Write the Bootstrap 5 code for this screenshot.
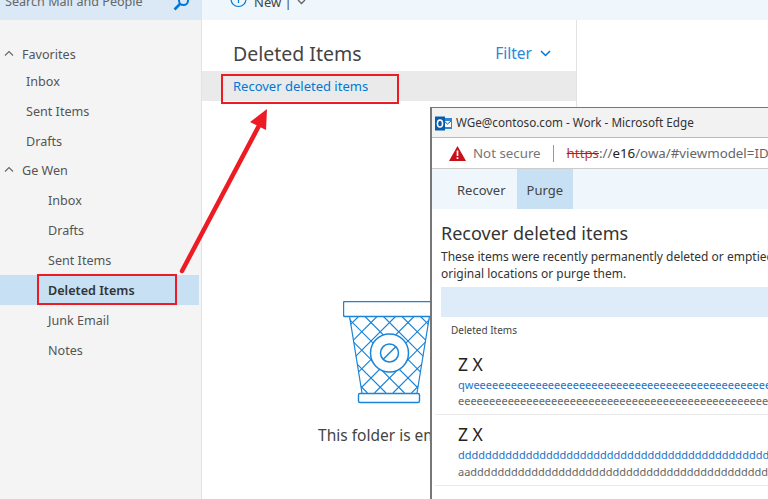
<!DOCTYPE html>
<html lang="en"><head><meta charset="utf-8"><title>Deleted Items</title>
<link href="https://cdn.jsdelivr.net/npm/bootstrap@5.3.0/dist/css/bootstrap.min.css" rel="stylesheet">
<style>
html,body{height:499px;overflow:hidden}
body{font-family:"Noto Sans","Open Sans",sans-serif;color:#333;position:relative;background:#fff}
.shell{height:499px}
.side{width:202px;background:#f4f4f4;border-right:1px solid #e3e3e3;flex:none}
.searchbar{height:20px;background:#dbe9f7;overflow:hidden;color:#666;font-size:12.600px;line-height:20px}
.searchbar span{margin:-8px 0 0 5px}
.searchbar svg{margin:-5px 11px 0 0}
.favs{padding-top:19px}
.nv-head,.nv-item,.nv-sub{height:30px;line-height:32px;font-size:12.600px;color:#555;white-space:nowrap}
.nv-head{padding-left:22px;position:relative}
.nv-fav{height:27px}
.nv-wen{margin-top:-1px}
.nv-head svg{position:absolute;left:4px;top:11px}
.nv-item{padding-left:26px}
.nv-sub{padding-left:48px}
.nv-sel{background:#c7e0f4;font-weight:600;color:#333;margin-right:2px}
.main{min-width:0}
.cmdbar{height:20px;background:#eff6fc;overflow:hidden;font-size:13px;color:#444;line-height:20px;padding-left:28px}
.cmdbar span{margin-top:-8px;margin-left:7px}
.cmdbar svg{flex:none}
.cmdbar .chev{margin-left:5px}
.pane{width:375px;height:88px;border-right:1px solid #e3e3e3}
.pane-top{height:51px;padding:19px 25px 0 31px}
.pane-title{font-size:19.500px;line-height:30px;color:#444}
.pane-filter{font-size:15.500px;line-height:29px;height:29px;color:#2b88d8}
.pane-link{height:30px;background:#eaeaea;padding-left:31px;font-size:13px;line-height:30px;color:#0078d7;text-decoration:none;display:block}
.empty-zone{width:375px}
.empty-zone svg{margin-top:193px;display:block;margin-left:141px}
.empty-zone p{font-size:15.500px;color:#444;text-align:center;margin:19px 0 0;line-height:24px}
.popup{position:absolute;left:430px;top:107px;right:0;bottom:0;background:#fff;border:solid #777;border-width:1px 0 0 2px;overflow:hidden;white-space:nowrap}
.pop-title{height:30px;background:#f2f2f2;border-bottom:1px solid #bbb;font-size:11.700px;color:#333;padding:1px 0 0 3px;gap:4px}
.pop-addr{height:31px;border-bottom:1px solid #ccc;padding:1px 0 0 17px;font-size:13.300px}
.pop-addr svg,.pop-addr .warn,.pop-addr .divi{flex:none}
.pop-addr .warn{color:#767676;margin-left:7px}
.pop-addr .divi{width:1px;height:17px;background:#999;margin:0 13px 0 12px}
.pop-addr s{color:#b33;text-decoration-color:#e00}
.pop-url{color:#666}.pop-url em{font-style:normal;color:#222}
.pop-tools{height:40px;background:#eff6fc;font-size:13px;line-height:42px;color:#444;padding-left:15px}
.pop-tools div{padding:0 11px 0 10px}
.pop-tools .on{background:#c7e0f4;padding:0 10px}
.pop-body{padding:11px 0 0 9px}
.pop-h{font-size:18px;line-height:27px;color:#333;margin:0;font-weight:400}
.pop-p{font-size:12px;line-height:17px;margin:1px 0 0;color:#333}
.pop-band{height:30px;background:#deecf9;margin-top:5px}
.pop-lbl{font-size:10px;line-height:14px;margin:6px 0 0 10px;color:#444}
.rowz{margin-left:-6px;padding:5px 0 0 23px;border-bottom:1px solid #eaeaea;height:71px}
.rowz1{margin-top:6px;height:72px;padding-top:7px}
.rowz .who{font-size:17.500px;line-height:26px;color:#222;margin-top:1px}
.rowz .blu{font-size:11px;line-height:16px;color:#1a73c9}
.rowz .gry{font-size:11px;line-height:16px;color:#666}
.rowz2 .gry{margin-top:1px}
.anno{position:absolute;left:0;top:0;pointer-events:none}
.redbox{position:absolute;border:2px solid #ed1c24}
.rb1{left:221px;top:74px;width:178px;height:30px}
.rb2{left:37px;top:274px;width:140px;height:31px}
</style></head>
<body>
<div class="d-flex shell">
  <aside class="side">
    <div class="searchbar d-flex justify-content-between align-items-start">
      <span>Search Mail and People</span>
      <svg width="17" height="17" viewBox="0 0 17 17" fill="none" stroke="#0078d7" stroke-width="2"><circle cx="10.500" cy="5.500" r="4.500"/><path d="M7 9L1.500 14.500" stroke-width="2.600"/></svg>
    </div>
    <nav class="favs">
      <div class="nv-head nv-fav"><svg width="10" height="7" viewBox="0 0 10 7" fill="none" stroke="#666" stroke-width="1.100"><path d="M1 5.500L5 1.500L9 5.500"/></svg>Favorites</div>
      <div class="nv-item">Inbox</div><div class="nv-item">Sent Items</div><div class="nv-item">Drafts</div>
      <div class="nv-head nv-wen"><svg width="10" height="7" viewBox="0 0 10 7" fill="none" stroke="#666" stroke-width="1.100"><path d="M1 5.500L5 1.500L9 5.500"/></svg>Ge Wen</div>
      <div class="nv-sub">Inbox</div><div class="nv-sub">Drafts</div><div class="nv-sub">Sent Items</div>
      <div class="nv-sub nv-sel">Deleted Items</div><div class="nv-sub">Junk Email</div><div class="nv-sub">Notes</div>
    </nav>
  </aside>
  <main class="main flex-grow-1">
    <div class="cmdbar d-flex align-items-start">
      <svg width="17" height="8" viewBox="0 0 17 8" fill="none" stroke="#0078d7" stroke-width="1.200"><circle cx="8.500" cy="-1" r="7.500"/><path d="M8.500 -5V3M4.500 -1H12.500"/></svg>
      <span>New |</span>
      <svg class="chev" width="9" height="6" viewBox="0 0 9 6" fill="none" stroke="#666" stroke-width="1.400"><path d="M1 0L4.500 3.500L8 0"/></svg>
    </div>
    <section class="pane">
      <div class="pane-top d-flex justify-content-between">
        <div class="pane-title">Deleted Items</div>
        <div class="pane-filter d-flex align-items-center gap-2">Filter <svg width="11" height="7" viewBox="0 0 11 7" fill="none" stroke="#0078d7" stroke-width="1.500"><path d="M1 1L5.500 5.500L10 1"/></svg></div>
      </div>
      <a class="pane-link" href="#">Recover deleted items</a>
    </section>
    <section class="empty-zone">
      <svg width="94" height="103" viewBox="343 301 94 103" fill="none" stroke="#1a84d8" stroke-width="1.200">
        <defs><clipPath id="binc"><path d="M349 316L430 316L417 393L362 393Z"/></clipPath></defs>
        <g clip-path="url(#binc)">
          <path d="M272 316L349 393M290.500 316L367.500 393M309 316L386 393M327.500 316L404.500 393M346 316L423 393M364.500 316L441.500 393M383 316L460 393M401.500 316L478.500 393M420 316L497 393"/>
          <path d="M359 316L282 393M377.500 316L300.500 393M396 316L319 393M414.500 316L337.500 393M433 316L356 393M451.500 316L374.500 393M470 316L393 393M488.500 316L411.500 393M507 316L430 393"/>
        </g>
        <path d="M349.500 316L362 393M429.500 316L417 393"/>
        <circle cx="389.500" cy="353" r="19" fill="#fff" stroke-width="1.500"/>
        <circle cx="389.500" cy="353" r="9" fill="#fff" stroke-width="1.500"/>
        <path d="M383 359.500L396 346.500" stroke-width="1.500"/>
        <rect x="343.500" y="301.500" width="92" height="15" rx="1.500" fill="#fff" stroke-width="1.400"/>
        <rect x="358.500" y="393.500" width="61" height="9" rx="1.500" fill="#fff" stroke-width="1.400"/>
      </svg>
      <p>This folder is empty</p>
    </section>
  </main>
</div>

<section class="popup">
  <div class="pop-title d-flex align-items-center">
    <svg width="17" height="17" viewBox="0 0 17 17"><rect x="5" y="3" width="12" height="11" fill="#2b88d8"/><path d="M9 6H16V12H9Z" fill="#fff"/><path d="M9 6L12.500 9L16 6" fill="none" stroke="#0a5ca8"/><rect x="0" y="1.500" width="10" height="14" fill="#0a5ca8"/><ellipse cx="5" cy="8.500" rx="2.600" ry="3.500" fill="none" stroke="#fff" stroke-width="1.500"/></svg>
    <span>WGe@contoso.com - Work - Microsoft Edge</span>
  </div>
  <div class="pop-addr d-flex align-items-center">
    <svg width="17" height="15" viewBox="0 0 17 15"><path d="M8.500 0L17 15H0Z" fill="#c8101a"/><path d="M8.500 4.500V10M8.500 11.200V13" stroke="#fff" stroke-width="1.700"/></svg>
    <span class="warn">Not secure</span><span class="divi"></span>
    <span class="pop-url"><s>https</s>://<em>e16</em>/owa/#viewmodel=IDeletedItemsViewModelFactory</span>
  </div>
  <div class="pop-tools d-flex"><div>Recover</div><div class="on">Purge</div></div>
  <div class="pop-body">
    <h1 class="pop-h">Recover deleted items</h1>
    <p class="pop-p">These items were recently permanently deleted or emptied from the Deleted Items folder. You can recover them to their<br>original locations or purge them.</p>
    <div class="pop-band"></div>
    <div class="pop-lbl">Deleted Items</div>
    <div class="rowz rowz1">
      <div class="who">Z X</div>
      <div class="blu">qweeeeeeeeeeeeeeeeeeeeeeeeeeeeeeeeeeeeeeeeeeeeeeeeeeeeeeeeeeeeeeeeeeeeeeeee</div>
      <div class="gry">eeeeeeeeeeeeeeeeeeeeeeeeeeeeeeeeeeeeeeeeeeeeeeeeeeeeeeeeeeeeeeeeeeeeeeeeee</div>
    </div>
    <div class="rowz rowz2">
      <div class="who">Z X</div>
      <div class="blu">dddddddddddddddddddddddddddddddddddddddddddddddddddddddddddddddddd</div>
      <div class="gry">aadddddddddddddddddddddddddddddddddddddddddddddddddddddddddddddddd</div>
    </div>
  </div>
</section>

<div class="redbox rb1"></div><div class="redbox rb2"></div>
<svg class="anno" width="768" height="499" viewBox="0 0 768 499" fill="none">
  <path d="M182 271L262 120" stroke="#ed1c24" stroke-width="4.500" stroke-linecap="round"/>
  <path d="M267 109L266 130L250 122Z" fill="#ed1c24"/>
</svg>
</body></html>
